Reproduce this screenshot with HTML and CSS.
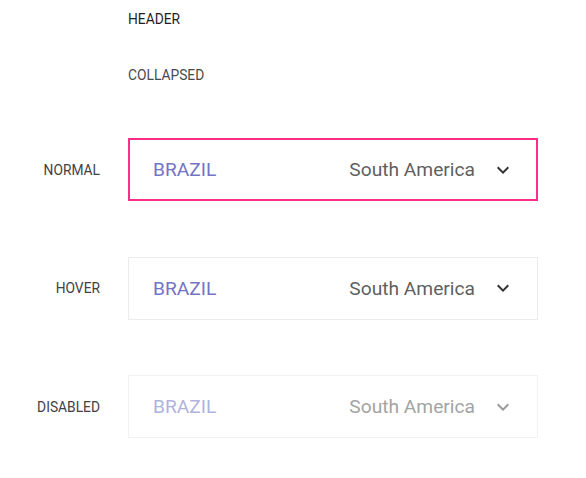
FILE: index.html
```html
<!DOCTYPE html>
<html lang="en">
<head>
  <meta charset="UTF-8">
  <meta name="viewport" content="width=device-width, initial-scale=1.0">
  <title>Select States</title>
  <link rel="stylesheet" href="styles.css">
</head>

<body>
  <div class="page">
    <!-- Headings -->
    <div class="heading">HEADER</div>
    <div class="heading sub">COLLAPSED</div>

    <!-- States -->
    <div class="states">
      <div class="state-label">NORMAL</div>
      <div class="select normal">
        <span class="country">BRAZIL</span>
        <span class="region">South America</span>
        <svg class="chevron" viewBox="0 0 24 24" width="24" height="24"><path d="M16.59 8.59L12 13.17 7.41 8.59 6 10l6 6 6-6z"/></svg>
      </div>

      <div class="state-label">HOVER</div>
      <div class="select hover">
        <span class="country">BRAZIL</span>
        <span class="region">South America</span>
        <svg class="chevron" viewBox="0 0 24 24" width="24" height="24"><path d="M16.59 8.59L12 13.17 7.41 8.59 6 10l6 6 6-6z"/></svg>
      </div>

      <div class="state-label">DISABLED</div>
      <div class="select disabled">
        <span class="country">BRAZIL</span>
        <span class="region">South America</span>
        <svg class="chevron" viewBox="0 0 24 24" width="24" height="24"><path d="M16.59 8.59L12 13.17 7.41 8.59 6 10l6 6 6-6z"/></svg>
      </div>
    </div>
  </div>
</body>
</html>
```

FILE: styles.css
```css
body, html
{
  margin: 0;
  padding: 0;
  background: #ffffff;
  font-family: Roboto, "Liberation Sans", sans-serif;
}

.page
{
  padding-top: 12px;
}

/* Headings */
.heading
{
  margin-left: 128px;
  font-size: 13.8px;
  line-height: 15px;
  color: #1f1f1f;
}

.heading.sub
{
  margin-top: 41px;
  color: #4a4a4a;
}

/* State rows */
.states
{
  display: grid;
  grid-template-columns: 100px 410px;
  column-gap: 28px;
  row-gap: 55.5px;
  margin-top: 55px;
  align-items: center;
}

.state-label
{
  text-align: right;
  font-size: 13.8px;
  color: #424242;
}

/* Select box */
.select
{
  display: flex;
  align-items: center;
  height: 63px;
  box-sizing: border-box;
  padding: 0 22px 0 24px;
  border: 1px solid #ececec;
  background: #ffffff;
}

.select.normal
{
  border: 2px solid #ff2d8a;
  padding-left: 23px;
  padding-right: 21px;
}

.select.disabled
{
  border-color: #f2f2f2;
}

.country
{
  flex: 1;
  font-size: 19.2px;
  color: #7474c4;
}

.region
{
  font-size: 19.2px;
  color: #5f5f5f;
  margin-right: 16px;
}

.chevron
{
  fill: #333333;
}

.disabled .country
{
  color: #b2b2df;
}

.disabled .region
{
  color: #a3a3a3;
}

.disabled .chevron
{
  fill: #9a9a9a;
}
```
